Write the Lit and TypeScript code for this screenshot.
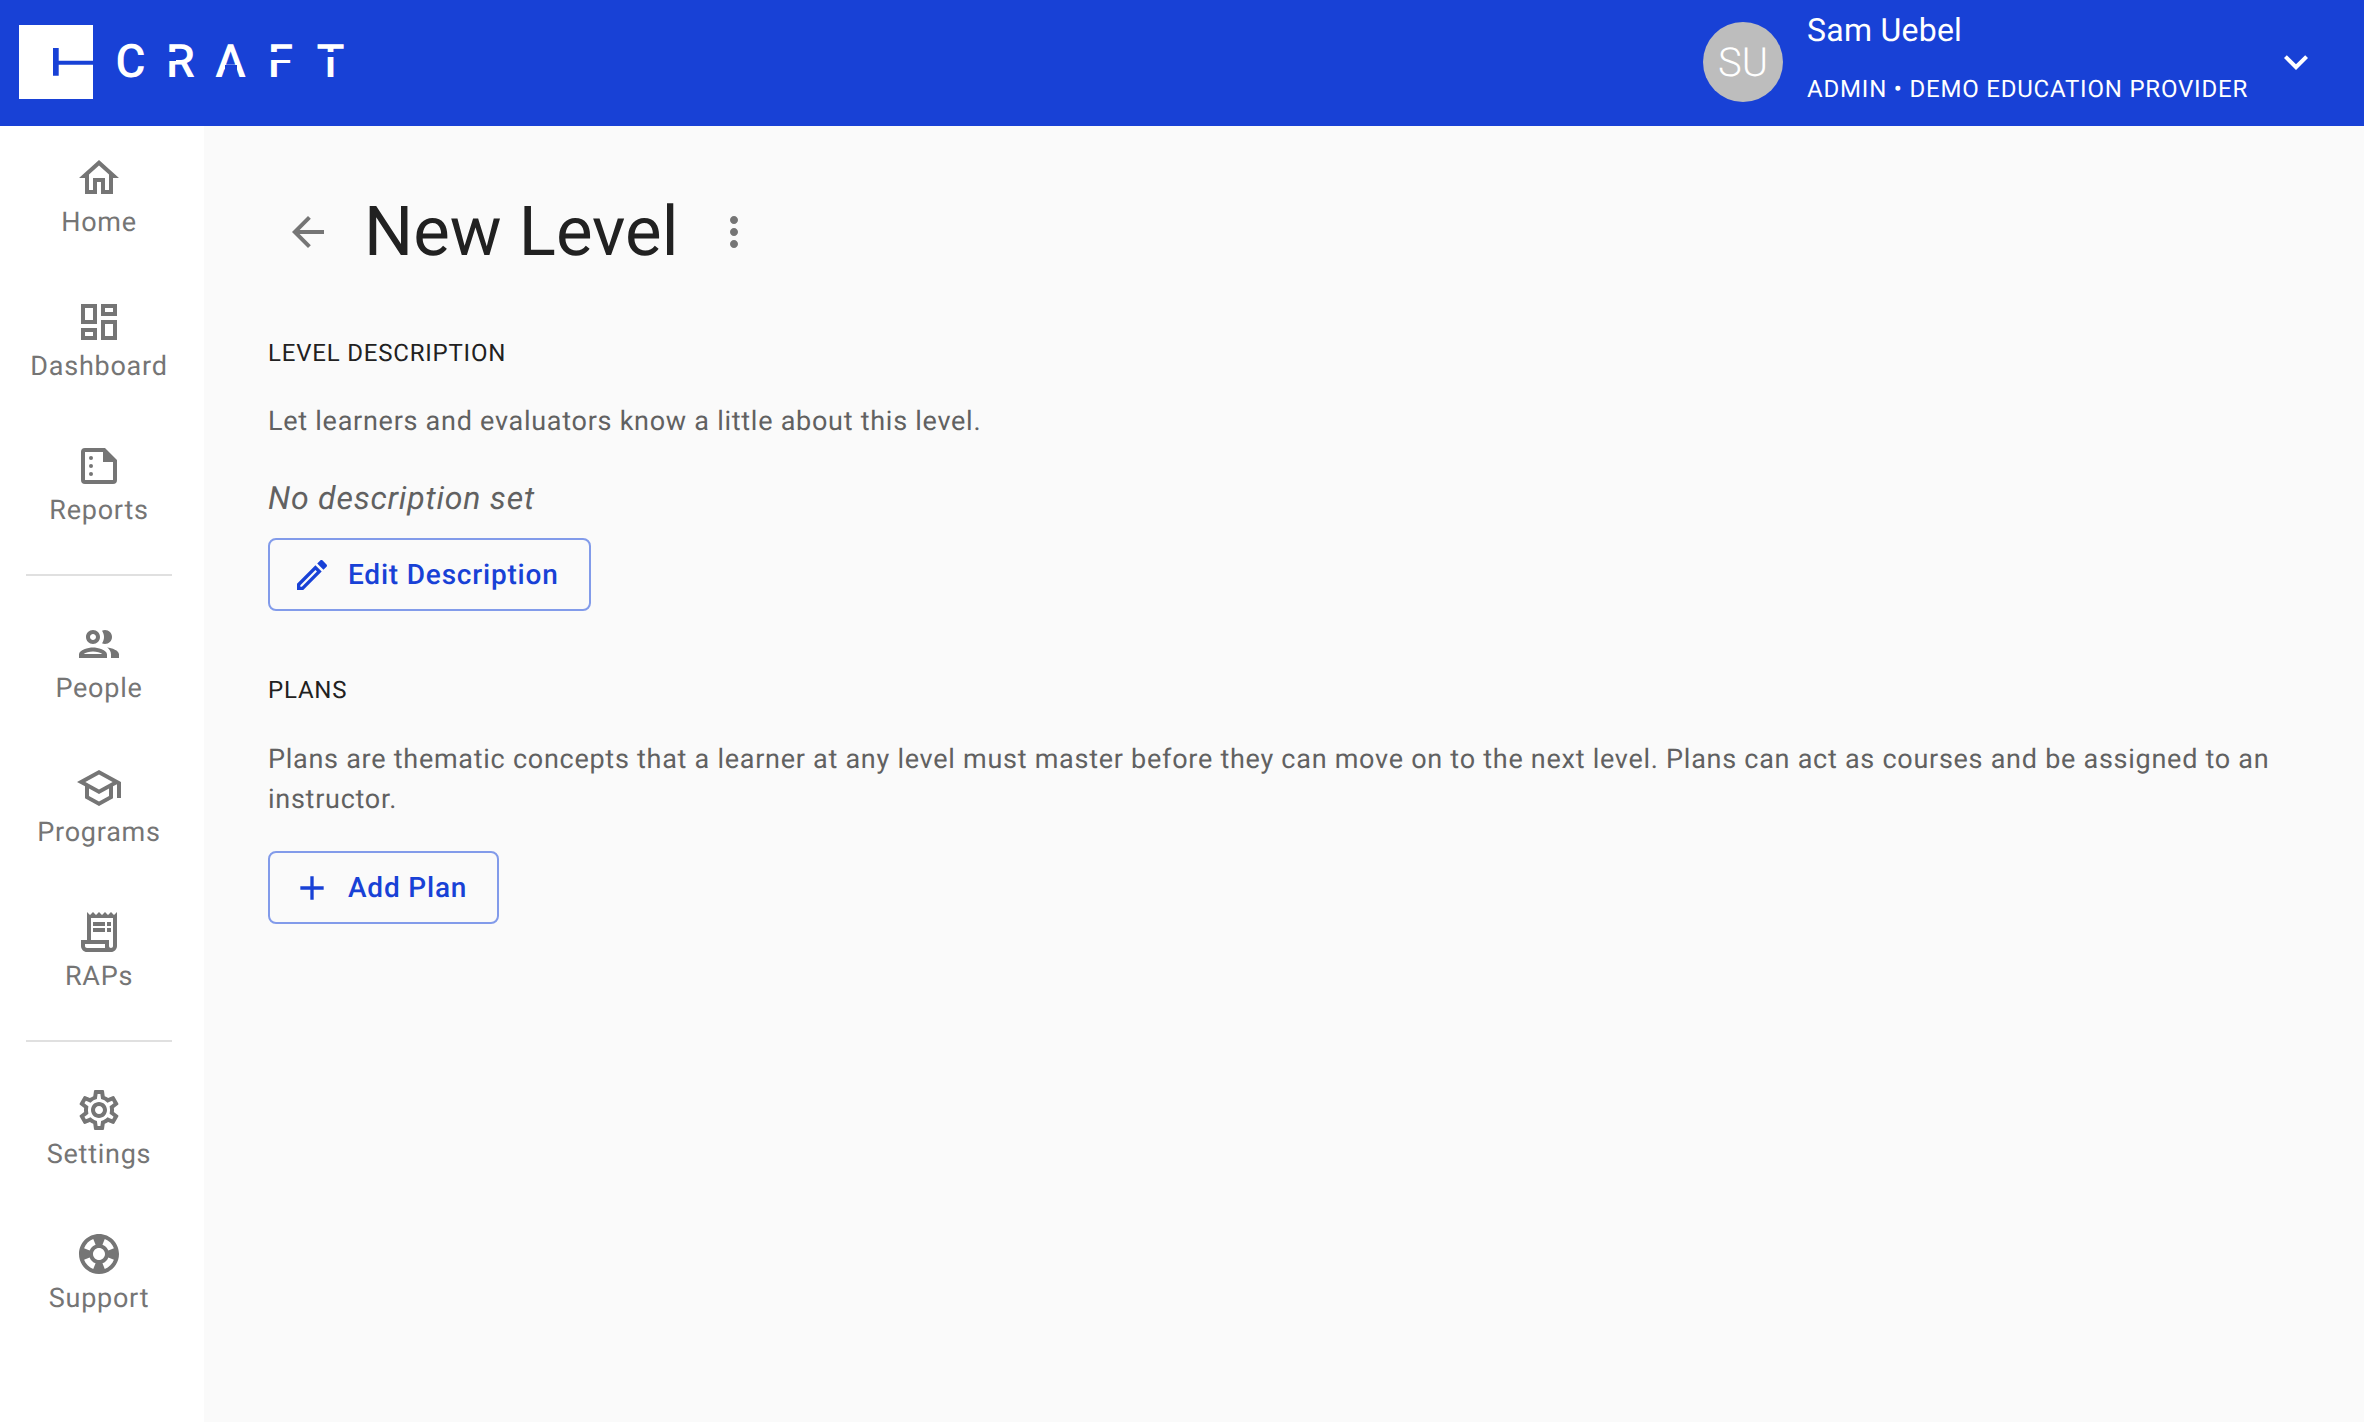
import { LitElement, html, css, svg } from "lit";
import { customElement } from "lit/decorators.js";

const ICONS: Record<string, unknown> = {
  home: svg`<path d="M12 5.69l5 4.5V18h-2v-6H9v6H7v-7.81l5-4.5M12 3L2 12h3v8h6v-6h2v6h6v-8h3L12 3z"/>`,
  dashboard: svg`<path d="M19 5v2h-4V5h4M9 5v6H5V5h4m10 8v6h-4v-6h4M9 17v2H5v-2h4M21 3h-8v6h8V3zM11 3H3v10h8V3zm10 8h-8v10h8V11zm-10 4H3v6h8v-6z"/>`,
  reports: svg`<path fill-rule="evenodd" d="M5 3h10l6 6v10a2 2 0 0 1-2 2H5a2 2 0 0 1-2-2V5a2 2 0 0 1 2-2zm0 2v14h14v-9h-5V5z"/><circle cx="8" cy="8" r="1"/><circle cx="8" cy="12" r="1"/><circle cx="8" cy="16" r="1"/>`,
  people: svg`<path d="M9 13.75c-2.34 0-7 1.17-7 3.5V19h14v-1.75c0-2.33-4.66-3.5-7-3.5zM4.34 17c.84-.58 2.87-1.25 4.66-1.25s3.82.67 4.66 1.25H4.34zM9 12c1.93 0 3.5-1.57 3.5-3.5S10.93 5 9 5 5.5 6.57 5.5 8.5 7.07 12 9 12zm0-5c.83 0 1.5.67 1.5 1.5S9.83 10 9 10s-1.5-.67-1.5-1.5S8.17 7 9 7zm7.04 6.81c1.16.84 1.96 1.96 1.96 3.44V19h4v-1.75c0-2.02-3.5-3.17-5.96-3.44zM15 12c1.93 0 3.5-1.57 3.5-3.5S16.93 5 15 5c-.54 0-1.04.13-1.5.35.63.89 1 1.98 1 3.15s-.37 2.26-1 3.15c.46.22.96.35 1.5.35z"/>`,
  programs: svg`<path d="M12 3L1 9l4 2.18v6L12 21l7-3.82v-6l2-1.09V17h2V9L12 3zm6.82 6L12 12.72 5.18 9 12 5.28 18.82 9zM17 15.99l-5 2.73-5-2.73v-3.72L12 15l5-2.73v3.72z"/>`,
  raps: svg`<path d="M19.5 3.5 18 2l-1.5 1.5L15 2l-1.5 1.5L12 2l-1.5 1.5L9 2 7.5 3.5 6 2v14H3v3c0 1.66 1.34 3 3 3h12c1.66 0 3-1.34 3-3V2l-1.5 1.5zM15 20H6c-.55 0-1-.45-1-1v-1h10v2zm4-1c0 .55-.45 1-1 1s-1-.45-1-1v-3H8V5h11v14z"/><path d="M9 7h6v2H9zM16 7h2v2h-2zM9 10h6v2H9zM16 10h2v2h-2z"/>`,
  settings: svg`<path d="M19.43 12.98c.04-.32.07-.64.07-.98 0-.34-.03-.66-.07-.98l2.11-1.65c.19-.15.24-.42.12-.64l-2-3.46c-.09-.16-.26-.25-.44-.25-.06 0-.12.01-.17.03l-2.49 1c-.52-.4-1.08-.73-1.69-.98l-.38-2.65C14.46 2.18 14.25 2 14 2h-4c-.25 0-.46.18-.49.42l-.38 2.65c-.61.25-1.17.59-1.69.98l-2.49-1c-.06-.02-.12-.03-.18-.03-.17 0-.34.09-.43.25l-2 3.46c-.13.22-.07.49.12.64l2.11 1.65c-.04.32-.07.65-.07.98 0 .33.03.66.07.98l-2.11 1.65c-.19.15-.24.42-.12.64l2 3.46c.09.16.26.25.44.25.06 0 .12-.01.17-.03l2.49-1c.52.4 1.08.73 1.69.98l.38 2.65c.03.24.24.42.49.42h4c.25 0 .46-.18.49-.42l.38-2.65c.61-.25 1.17-.59 1.69-.98l2.49 1c.06.02.12.03.18.03.17 0 .34-.09.43-.25l2-3.46c.12-.22.07-.49-.12-.64l-2.11-1.65zm-1.98-1.71c.04.31.05.52.05.73 0 .21-.02.43-.05.73l-.14 1.13.89.7 1.08.84-.7 1.21-1.27-.51-1.04-.42-.9.68c-.43.32-.84.56-1.25.73l-1.06.43-.16 1.13-.2 1.35h-1.4l-.19-1.35-.16-1.13-1.06-.43c-.43-.18-.83-.41-1.23-.71l-.91-.7-1.06.43-1.27.51-.7-1.21 1.08-.84.89-.7-.14-1.13c-.03-.31-.05-.54-.05-.74s.02-.43.05-.73l.14-1.13-.89-.7-1.08-.84.7-1.21 1.27.51 1.04.42.9-.68c.43-.32.84-.56 1.25-.73l1.06-.43.16-1.13.2-1.35h1.39l.19 1.35.16 1.13 1.06.43c.43.18.83.41 1.23.71l.91.7 1.06-.43 1.27-.51.7 1.21-1.07.85-.89.7.14 1.13zM12 8c-2.21 0-4 1.79-4 4s1.79 4 4 4 4-1.79 4-4-1.79-4-4-4zm0 6c-1.1 0-2-.9-2-2s.9-2 2-2 2 .9 2 2-.9 2-2 2z"/>`,
  support: svg`<path d="M12 2C6.48 2 2 6.48 2 12s4.48 10 10 10 10-4.48 10-10S17.52 2 12 2zm7.46 7.12l-2.78 1.15c-.51-1.36-1.58-2.44-2.95-2.94l1.15-2.78c2.1.8 3.77 2.47 4.58 4.57zM12 15c-1.66 0-3-1.34-3-3s1.34-3 3-3 3 1.34 3 3-1.34 3-3 3zM9.13 4.54l1.17 2.78c-1.38.5-2.47 1.59-2.98 2.97L4.54 9.13c.81-2.11 2.48-3.78 4.59-4.59zM4.54 14.87l2.78-1.15c.51 1.38 1.59 2.46 2.97 2.96l-1.17 2.78c-2.1-.81-3.77-2.48-4.58-4.59zm10.34 4.59l-1.15-2.78c1.37-.51 2.45-1.59 2.95-2.97l2.78 1.17c-.81 2.1-2.48 3.77-4.58 4.58z"/>`,
  back: svg`<path d="M20 11H7.83l5.59-5.59L12 4l-8 8 8 8 1.41-1.41L7.83 13H20v-2z"/>`,
  more: svg`<path d="M12 8c1.1 0 2-.9 2-2s-.9-2-2-2-2 .9-2 2 .9 2 2 2zm0 2c-1.1 0-2 .9-2 2s.9 2 2 2 2-.9 2-2-.9-2-2-2zm0 6c-1.1 0-2 .9-2 2s.9 2 2 2 2-.9 2-2-.9-2-2-2z"/>`,
  edit: svg`<path d="M3 17.25V21h3.75L17.81 9.94l-3.75-3.75L3 17.25zM5.92 19H5v-.92l9.06-9.06.92.92L5.92 19zM20.71 5.63l-2.34-2.34c-.2-.2-.45-.29-.71-.29s-.51.1-.7.29l-1.83 1.83 3.75 3.75 1.83-1.83c.39-.39.39-1.02 0-1.41z"/>`,
  add: svg`<path d="M19 13h-6v6h-2v-6H5v-2h6V5h2v6h6v2z"/>`,
  chevron: svg`<path d="M16.59 8.59L12 13.17 7.41 8.59 6 10l6 6 6-6z"/>`,
};

const icon = (name: string) =>
  html`<svg class="icon" viewBox="0 0 24 24" fill="currentColor" aria-hidden="true">${ICONS[name]}</svg>`;

const NAV_GROUPS = [
  [["home", "Home"], ["dashboard", "Dashboard"], ["reports", "Reports"]],
  [["people", "People"], ["programs", "Programs"], ["raps", "RAPs"]],
  [["settings", "Settings"], ["support", "Support"]],
];

@customElement("app-root")
export class AppRoot extends LitElement {
  static styles = css`
    :host {
      display: flex;
      flex-direction: column;
      width: 2364px;
      height: 1422px;
      overflow: hidden;
      background: #fafafa;
      font-family: Roboto, "Liberation Sans", sans-serif;
      color: #212121;
      text-rendering: geometricPrecision;
    }
    .icon { display: block; flex: none; width: 100%; height: 100%; }

    .topbar {
      flex: none;
      height: 126px;
      box-sizing: border-box;
      background: #1841d6;
      color: #fff;
      display: flex;
      align-items: center;
      justify-content: space-between;
      padding: 0 44px 2px 19px;
    }
    .brand { display: flex; align-items: center; gap: 12.5px; }
    .mark { display: block; width: 74px; height: 74px; }
    .wordmark {
      display: flex;
      font-size: 46px;
      line-height: 46px;
      font-weight: 500;
    }
    .wordmark span { position: relative; width: 50px; text-align: center; }
    .wordmark span::after {
      content: "";
      position: absolute;
      background: #1841d6;
    }
    .wordmark .r::after { left: 8px; width: 12px; top: 13px; height: 9px; }
    .wordmark .a::after { left: 50%; margin-left: -6px; width: 12px; top: 26px; height: 7px; }
    .wordmark .f::after { left: 8px; right: 8px; top: 13px; height: 8px; }
    .wordmark .t::after { left: 8px; right: 8px; top: 13px; height: 5px; }
    .user { display: flex; align-items: center; }
    .avatar {
      width: 80px;
      height: 80px;
      border-radius: 50%;
      background: #bdbdbd;
      display: flex;
      align-items: center;
      justify-content: center;
      font-size: 40px;
      font-weight: 300;
      margin-right: 24px;
    }
    .who { display: flex; flex-direction: column; gap: 19px; margin: -5px 24px 0 0; }
    .name { font-size: 32px; line-height: 40px; letter-spacing: 0.25px; }
    .role { font-size: 24px; line-height: 40px; letter-spacing: 0.8px; }
    .chev { width: 48px; height: 48px; }

    .body { flex: 1; display: flex; min-height: 0; }
    .side {
      flex: none;
      width: 204px;
      background: #fff;
      padding: 4px 6px 0 0;
      box-sizing: border-box;
      color: #757575;
    }
    .group { display: flex; flex-direction: column; }
    .divider { height: 2px; background: #e0e0e0; margin: 12px 26px 20px; }
    .item {
      height: 144px;
      box-sizing: border-box;
      padding-top: 24px;
      display: flex;
      flex-direction: column;
      align-items: center;
      font-size: 27px;
      line-height: 40px;
      letter-spacing: 0.75px;
    }
    .nav-ic { width: 48px; height: 48px; }

    .main { flex: 1; min-width: 0; padding: 64px 50px 0 64px; }
    .title-row { display: flex; align-items: center; height: 84px; }
    .back { width: 48px; height: 48px; color: #757575; margin-right: 32px; margin-left: 16px; }
    h1 { margin: 0; font-size: 69px; line-height: 84px; font-weight: 400; letter-spacing: 0; }
    .more { width: 48px; height: 48px; color: #757575; margin-left: 32px; }
    h2 {
      margin: 59px 0 0;
      font-size: 24px;
      line-height: 40px;
      font-weight: 400;
      letter-spacing: 0.8px;
      color: #212121;
    }
    p {
      margin: 28px 0 0;
      font-size: 27px;
      line-height: 40px;
      letter-spacing: 0.73px;
      color: #616161;
    }
    .none { margin-top: 37px; font-size: 32px; font-style: italic; letter-spacing: 0.8px; }
    .btn {
      display: inline-flex;
      align-items: center;
      box-sizing: border-box;
      height: 73px;
      padding: 0 30px 0 22px;
      border: 2px solid #829bea;
      border-radius: 8px;
      color: #1841d6;
      background: transparent;
      font: 500 28px/40px Roboto, "Liberation Sans", sans-serif;
      letter-spacing: 0.8px;
      margin-top: 20px;
    }
    .btn-ic { width: 40px; height: 40px; margin-right: 16px; }
    .plans { margin-top: 59px; }
    .plans-text { margin-top: 29px; }
    .add { margin-top: 32px; }
  `;

  render() {
    return html`
      <header class="topbar">
        <div class="brand">
          <svg class="mark" viewBox="0 0 74 74" aria-hidden="true">
            <rect width="74" height="74" fill="#fff" />
            <path d="M34 23h5.7v12.7H74v4H39.7v11H34z" fill="#1841d6" />
          </svg>
          <div class="wordmark">
            <span>C</span><span class="r">R</span><span class="a">A</span><span class="f">F</span><span class="t">T</span>
          </div>
        </div>
        <div class="user">
          <div class="avatar">SU</div>
          <div class="who">
            <div class="name">Sam Uebel</div>
            <div class="role">ADMIN • DEMO EDUCATION PROVIDER</div>
          </div>
          <div class="chev">${icon("chevron")}</div>
        </div>
      </header>
      <div class="body">
        <nav class="side">
          ${NAV_GROUPS.map(
            (g, i) => html`
              ${i > 0 ? html`<div class="divider"></div>` : ""}
              <div class="group">
                ${g.map(([ic, label]) => html`<div class="item"><div class="nav-ic">${icon(ic)}</div><span>${label}</span></div>`)}
              </div>
            `
          )}
        </nav>
        <main class="main">
          <div class="title-row">
            <div class="back">${icon("back")}</div>
            <h1>New Level</h1>
            <div class="more">${icon("more")}</div>
          </div>
          <h2>LEVEL DESCRIPTION</h2>
          <p>Let learners and evaluators know a little about this level.</p>
          <p class="none">No description set</p>
          <div class="btn"><div class="btn-ic">${icon("edit")}</div>Edit Description</div>
          <h2 class="plans">PLANS</h2>
          <p class="plans-text">Plans are thematic concepts that a learner at any level must master before they can move on to the next level. Plans can act as courses and be assigned to an instructor.</p>
          <div class="btn add"><div class="btn-ic">${icon("add")}</div>Add Plan</div>
        </main>
      </div>
    `;
  }
}
